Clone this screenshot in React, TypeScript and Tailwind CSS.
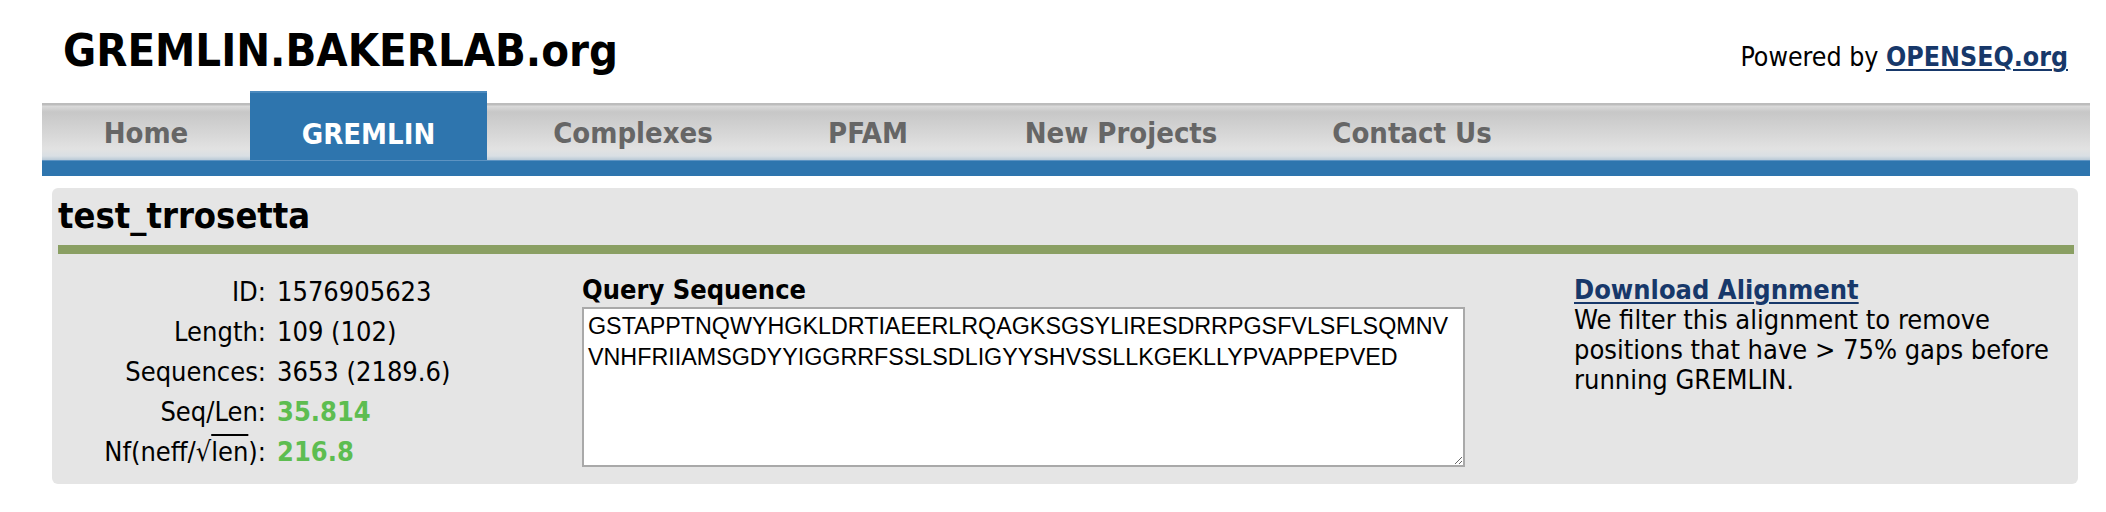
import React from 'react';

const NAV_ITEMS = [
  { label: 'Home', width: 'w-[208px]' },
  { label: 'GREMLIN', width: 'w-[237px]' },
  { label: 'Complexes', width: 'w-[292px]' },
  { label: 'PFAM', width: 'w-[178px]' },
  { label: 'New Projects', width: 'w-[328px]' },
  { label: 'Contact Us', width: 'w-[254px]' },
];

const SEQUENCE =
  'GSTAPPTNQWYHGKLDRTIAEERLRQAGKSGSYLIRESDRRPGSFVLSFLSQMNV\nVNHFRIIAMSGDYYIGGRRFSSLSDLIGYYSHVSSLLKGEKLLYPVAPPEPVED';

const App: React.FC = () => {
  const active = 'GREMLIN';

  return (
    <div className="w-[2106px] h-[512px] bg-white text-black font-['DejaVu_Sans_Condensed','DejaVu_Sans',sans-serif] [font-stretch:condensed]">
      {/* Header */}
      <div className="h-[103px] pt-[28px] pl-[63px] pr-[38px] flex justify-between items-baseline">
        <h1 className="text-[45px] leading-none font-bold">GREMLIN.BAKERLAB.org</h1>
        <div className="text-[26.5px] leading-none">
          Powered by{' '}
          <a href="#" className="font-bold text-[#17386a] underline decoration-2 underline-offset-[3px]">
            OPENSEQ.org
          </a>
        </div>
      </div>

      {/* Nav */}
      <div className="ml-[42px] w-[2048px]">
        <ul className="flex h-[57px] bg-[linear-gradient(to_bottom,#bcbcbc_0px,#bcbcbc_2px,#dadada_3px,#c7c7c7_9px,#d6d6d6_30px,#e2e2e2_46px,#d9dfe4_53px,#b9c9d7_57px)]">
          {NAV_ITEMS.map((item) =>
            item.label === active ? (
              <li
                key={item.label}
                className={`${item.width} -mt-[12px] h-[69px] pt-[12px] flex items-center justify-center bg-[#2e75ae] border-t-2 border-[#4a89bd] text-white text-[29px] font-bold`}
              >
                <span className="pt-[4px]">{item.label}</span>
              </li>
            ) : (
              <li
                key={item.label}
                className={`${item.width} flex items-center justify-center text-[#666666] text-[29px] font-bold`}
              >
                <span className="pt-[5px]">{item.label}</span>
              </li>
            )
          )}
        </ul>
        <div className="h-[16px] bg-[#2e75ae] border-t border-[#5d93c2]" />
      </div>

      {/* Project panel */}
      <div className="ml-[52px] w-[2026px] mt-[12px] h-[296px] rounded-[6px] bg-[#e5e5e5] px-[6px] pt-[10px]">
        <h2 className="text-[36px] leading-none font-bold">test_trrosetta</h2>
        <div className="mt-[11px] h-[9px] w-[2016px] bg-[#8a9f63]" />

        <div className="mt-[18px] flex">
          {/* Stats */}
          <div className="w-[524px] grid grid-cols-[208px_1fr] text-[27px] leading-[40px]">
            <div className="text-right">ID:</div>
            <div className="pl-[11px]">1576905623</div>
            <div className="text-right">Length:</div>
            <div className="pl-[11px]">109 (102)</div>
            <div className="text-right">Sequences:</div>
            <div className="pl-[11px]">3653 (2189.6)</div>
            <div className="text-right">Seq/Len:</div>
            <div className="pl-[11px] font-bold text-[#5dbd51]">35.814</div>
            <div className="text-right">
              Nf(neff/√<span className="overline">len</span>):
            </div>
            <div className="pl-[11px] font-bold text-[#5dbd51]">216.8</div>
          </div>

          {/* Query sequence */}
          <div className="w-[883px]">
            <div className="text-[27px] leading-[35px] font-bold">Query Sequence</div>
            <textarea
              readOnly
              defaultValue={SEQUENCE}
              className="block w-[883px] h-[160px] border-2 border-[#a9a9a9] bg-white px-[4px] py-[2px] font-['Liberation_Sans',Arial,sans-serif] text-[23.3px] leading-[31px] text-black outline-none"
            />
          </div>

          {/* Download */}
          <div className="ml-[109px] w-[495px] pt-[3px] text-[27px] leading-[30px]">
            <a href="#" className="font-bold text-[#17386a] underline decoration-2 underline-offset-[3px]">
              Download Alignment
            </a>
            <p>We filter this alignment to remove positions that have &gt; 75% gaps before running GREMLIN.</p>
          </div>
        </div>
      </div>
    </div>
  );
};

export default App;
